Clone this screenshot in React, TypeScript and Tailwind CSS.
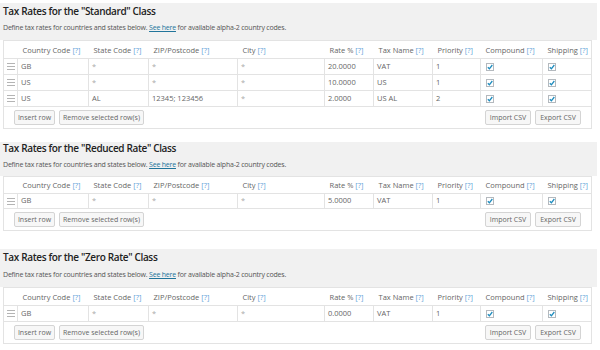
const headers = [
  { label: "Country Code", w: "w-[71px]" },
  { label: "State Code", w: "w-[60px]" },
  { label: "ZIP/Postcode", w: "w-[89px]" },
  { label: "City", w: "w-[87px]" },
  { label: "Rate %", w: "w-[49px]" },
  { label: "Tax Name", w: "w-[59px]" },
  { label: "Priority", w: "w-[48px]" },
  { label: "Compound", w: "w-[62px]" },
  { label: "Shipping", w: "w-[49px]" },
];

type Rate = {
  country: string;
  state: string;
  zip: string;
  city: string;
  rate: string;
  name: string;
  priority: string;
};

type Layout = {
  wrap: string;
  band: string;
  title: string;
  desc: string;
  head: string;
  row: string;
};

const Handle = () => (
  <svg width="8" height="7" viewBox="0 0 8 7">
    <rect x="0" y="0" width="8" height="1" fill="#b4b4b4" />
    <rect x="0" y="3" width="8" height="1" fill="#b4b4b4" />
    <rect x="0" y="6" width="8" height="1" fill="#b4b4b4" />
  </svg>
);

const Check = () => (
  <span className="inline-flex h-[8px] w-[8px] items-center justify-center border border-[#b4b9be] bg-white">
    <svg width="6" height="6" viewBox="0 0 6 6">
      <path d="M0.8 3.2 L2.4 4.8 L5.3 1" fill="none" stroke="#1e8cbe" strokeWidth="1.3" />
    </svg>
  </span>
);

const Btn = ({ children, w }: any) => (
  <button
    className={`h-[15px] ${w} rounded-[2px] border border-[#d4d4d4] bg-[#f7f7f7] text-[7px] leading-none text-[#666]`}
  >
    {children}
  </button>
);

const cell = "border border-[#e3e3e3] px-[3px] text-left text-[7.5px] text-[#666]";

const Section = ({ kind, rows, l }: { kind: string; rows: Rate[]; l: Layout }) => {
  return (
    <div className={l.wrap}>
      <div className={`flex flex-col bg-[#f1f1f1] pl-[3px] ${l.band}`}>
        <h3
          className={`${l.title} text-[10px] font-semibold leading-[12px] tracking-[-0.35px] text-[#222]`}
        >
          Tax Rates for the "{kind}" Class
        </h3>
        <p className={`${l.desc} text-[7px] leading-[10px] tracking-[-0.2px] text-[#555]`}>
          Define tax rates for countries and states below.{" "}
          <span className="text-[#21759b] underline">See here</span> for available alpha-2 country codes.
        </p>
      </div>
      <table className="ml-[3px] w-[588px] table-fixed border-collapse border border-[#e3e3e3]">
        <thead>
          <tr className={l.head}>
            <th className="w-[14px]"></th>
            {headers.map((h) => (
              <th
                key={h.label}
                className={`${h.w} px-[5px] pt-[2px] text-left text-[7.5px] font-normal whitespace-nowrap text-[#666]`}
              >
                {h.label} <span className="text-[#5fa3d8]">[?]</span>
              </th>
            ))}
          </tr>
        </thead>
        <tbody>
          {rows.map((r, i) => (
            <tr key={i} className={l.row}>
              <td className="border border-[#e3e3e3] pl-[3px]">
                <div className="flex items-center">
                  <Handle />
                </div>
              </td>
              <td className={cell}>{r.country}</td>
              <td className={`${cell} ${r.state === "*" ? "text-[#aaa]" : ""}`}>{r.state}</td>
              <td className={`${cell} ${r.zip === "*" ? "text-[#aaa]" : ""}`}>{r.zip}</td>
              <td className={`${cell} text-[#aaa]`}>{r.city}</td>
              <td className={cell}>{r.rate}</td>
              <td className={cell}>{r.name}</td>
              <td className={cell}>{r.priority}</td>
              <td className={`${cell} pl-[5px]`}>
                <div className="flex items-center">
                  <Check />
                </div>
              </td>
              <td className={`${cell} pl-[5px]`}>
                <div className="flex items-center">
                  <Check />
                </div>
              </td>
            </tr>
          ))}
        </tbody>
        <tfoot>
          <tr className="h-[22px]">
            <td colSpan={10} className="border border-[#e3e3e3] px-[10px]">
              <div className="flex items-center justify-between">
                <div className="flex gap-[4px]">
                  <Btn w="w-[41px]">Insert row</Btn>
                  <Btn w="w-[85px]">Remove selected row(s)</Btn>
                </div>
                <div className="flex gap-[4px]">
                  <Btn w="w-[46px]">Import CSV</Btn>
                  <Btn w="w-[46px]">Export CSV</Btn>
                </div>
              </div>
            </td>
          </tr>
        </tfoot>
      </table>
    </div>
  );
};

const standard: Rate[] = [
  { country: "GB", state: "*", zip: "*", city: "*", rate: "20.0000", name: "VAT", priority: "1" },
  { country: "US", state: "*", zip: "*", city: "*", rate: "10.0000", name: "US", priority: "1" },
  { country: "US", state: "AL", zip: "12345; 123456", city: "*", rate: "2.0000", name: "US AL", priority: "2" },
];

const reduced: Rate[] = [
  { country: "GB", state: "*", zip: "*", city: "*", rate: "5.0000", name: "VAT", priority: "1" },
];

const zero: Rate[] = [
  { country: "GB", state: "*", zip: "*", city: "*", rate: "0.0000", name: "VAT", priority: "1" },
];

export default function App() {
  return (
    <div className="h-[350px] w-[600px] overflow-hidden bg-white pt-[3px] font-['Open_Sans',sans-serif]">
      <div className="w-[597px]">
        <Section
          kind="Standard"
          rows={standard}
          l={{ wrap: "", band: "h-[37px]", title: "mt-[2px]", desc: "mt-[6px]", head: "h-[18px]", row: "h-[16px]" }}
        />
        <Section
          kind="Reduced Rate"
          rows={reduced}
          l={{ wrap: "mt-[13px]", band: "h-[34px]", title: "mt-0", desc: "mt-[6px]", head: "h-[17px]", row: "h-[15px]" }}
        />
        <Section
          kind="Zero Rate"
          rows={zero}
          l={{ wrap: "mt-[18px]", band: "h-[38px]", title: "mt-[2px]", desc: "mt-[7px]", head: "h-[18px]", row: "h-[16px]" }}
        />
      </div>
    </div>
  );
}
